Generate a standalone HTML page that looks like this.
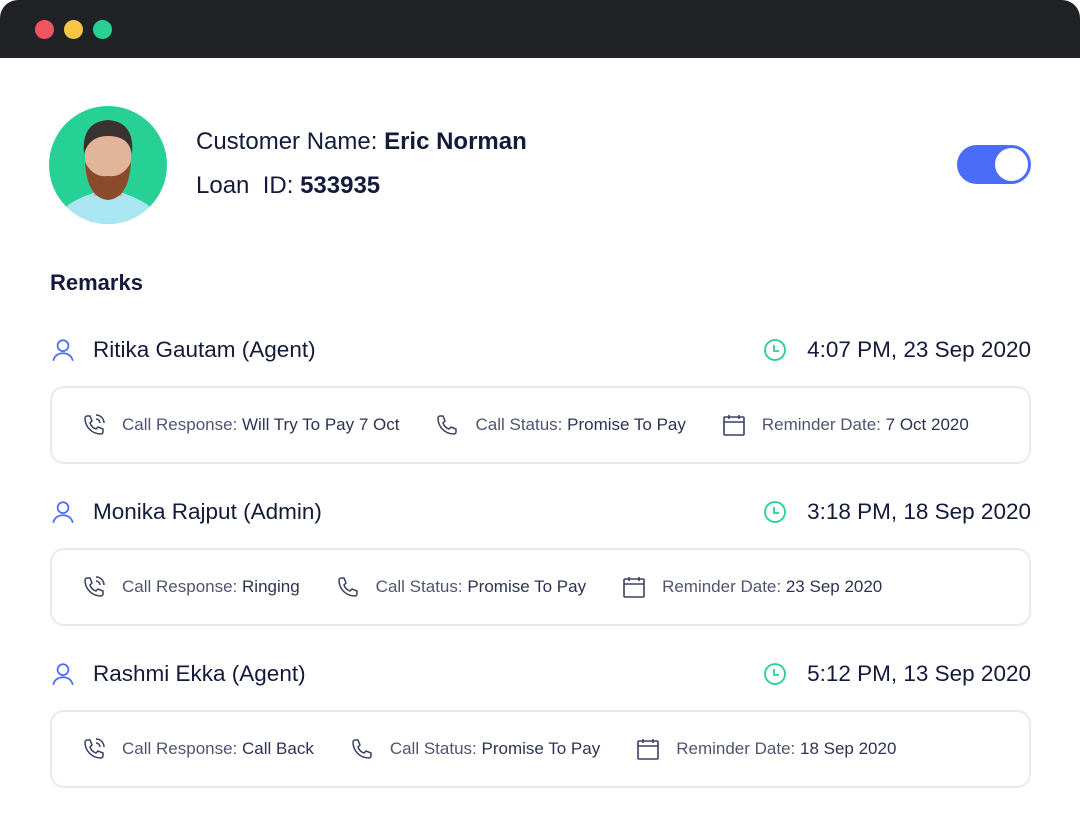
<!DOCTYPE html>
<html><head><meta charset="utf-8"><style>
*{margin:0;padding:0;box-sizing:border-box}
body{width:1080px;height:835px;background:#fff;font-family:"Liberation Sans",sans-serif;color:#131a3a;position:relative;overflow:hidden}
.bar{position:absolute;left:0;top:0;width:1080px;height:58px;background:#202226;border-radius:18px 18px 0 0}
.dot{position:absolute;top:20px;width:19px;height:19px;border-radius:50%}
.av{position:absolute;left:49px;top:106px;width:118px;height:118px;border-radius:50%;background:#27d095;overflow:hidden}
.t1{position:absolute;left:196px;top:128px;font-size:24px;color:#131a3a}
.t2{position:absolute;left:196px;top:172px;font-size:24px;color:#131a3a}
b{font-weight:bold}
.tog{position:absolute;left:957px;top:145px;width:74px;height:39px;border-radius:20px;background:#4a6cf7}
.tog i{position:absolute;right:3px;top:3px;width:33px;height:33px;border-radius:50%;background:#fff}
.rem{position:absolute;left:50px;top:270px;font-size:22px;font-weight:bold}
.hd{position:absolute;left:50px;width:981px;height:30px;font-size:22.5px;display:flex;align-items:center}
.hd .n{margin-left:17px}
.hd .tm{margin-left:auto;display:flex;align-items:center;gap:20px}
.box{position:absolute;left:50px;width:981px;height:78px;border:2px solid #e8eaf0;border-radius:14px;display:flex;align-items:center;padding-left:30px;font-size:17px;color:#4f5570}
.it{display:flex;align-items:center;margin-right:36px}
.it svg{margin-right:16px}
.it span{color:#2c3352}
</style></head><body>
<div class="bar"><div class="dot" style="left:35px;background:#f25562"></div><div class="dot" style="left:64px;background:#f7c644"></div><div class="dot" style="left:93px;background:#27d095"></div></div>
<div class="av"><svg width="118" height="118" viewBox="0 0 118 118">
<path d="M8 108 Q25 92 48 86 L70 86 Q93 92 110 108 L110 118 L8 118Z" fill="#a9e6f2"/>
<rect x="45" y="66" width="28" height="24" fill="#d9a58a"/>
<ellipse cx="59" cy="50" rx="23" ry="28" fill="#e2b49a"/>
<path d="M36 56 Q38 92 59 94 Q80 92 82 56 Q74 72 59 70 Q44 72 36 56Z" fill="#8a4a2c"/>
<path d="M35 48 Q32 16 59 14 Q86 16 83 48 Q80 30 59 30 Q40 30 35 48Z" fill="#3a3230"/>
</svg></div>
<div class="t1">Customer Name: <b>Eric Norman</b></div>
<div class="t2">Loan&nbsp; ID: <b>533935</b></div>
<div class="tog"><i></i></div>
<div class="rem">Remarks</div>

<div class="hd" style="top:335px"><svg width="26" height="26" viewBox="0 0 24 24" fill="none" stroke="#4a6cf7" stroke-width="1.6"><circle cx="12" cy="8" r="5"/><path d="M3 22c1-5 5-7 9-7s8 2 9 7"/></svg><span class="n">Ritika Gautam (Agent)</span><span class="tm"><svg width="24" height="24" viewBox="0 0 24 24" fill="none" stroke="#27d095" stroke-width="1.8"><circle cx="12" cy="12" r="10"/><path d="M11 7v6h5"/></svg>4:07 PM, 23 Sep 2020</span></div>
<div class="box" style="top:386px">
<div class="it"><svg width="24" height="24" viewBox="0 0 24 24" fill="none" stroke="#3a4160" stroke-width="1.5"><path d="M5 3l3 0 2 5-2 2c1 3 3 5 6 6l2-2 5 2v3c0 1-1 2-2 2C10 21 3 14 3 5c0-1 1-2 2-2z"/><path d="M14 6a4 4 0 0 1 4 4M14 2a8 8 0 0 1 8 8"/></svg>Call Response:&nbsp;<span>Will Try To Pay 7 Oct</span></div>
<div class="it"><svg width="24" height="24" viewBox="0 0 24 24" fill="none" stroke="#3a4160" stroke-width="1.5"><path d="M5 3l3 0 2 5-2 2c1 3 3 5 6 6l2-2 5 2v3c0 1-1 2-2 2C10 21 3 14 3 5c0-1 1-2 2-2z"/></svg>Call Status:&nbsp;<span>Promise To Pay</span></div>
<div class="it"><svg width="24" height="24" viewBox="0 0 24 24" fill="none" stroke="#3a4160" stroke-width="1.6"><rect x="2" y="4" width="20" height="18" rx="1"/><path d="M2 9h20M7 2v4M17 2v4"/></svg>Reminder Date:&nbsp;<span>7 Oct 2020</span></div>
</div>

<div class="hd" style="top:497px"><svg width="26" height="26" viewBox="0 0 24 24" fill="none" stroke="#4a6cf7" stroke-width="1.6"><circle cx="12" cy="8" r="5"/><path d="M3 22c1-5 5-7 9-7s8 2 9 7"/></svg><span class="n">Monika Rajput (Admin)</span><span class="tm"><svg width="24" height="24" viewBox="0 0 24 24" fill="none" stroke="#27d095" stroke-width="1.8"><circle cx="12" cy="12" r="10"/><path d="M11 7v6h5"/></svg>3:18 PM, 18 Sep 2020</span></div>
<div class="box" style="top:548px">
<div class="it"><svg width="24" height="24" viewBox="0 0 24 24" fill="none" stroke="#3a4160" stroke-width="1.5"><path d="M5 3l3 0 2 5-2 2c1 3 3 5 6 6l2-2 5 2v3c0 1-1 2-2 2C10 21 3 14 3 5c0-1 1-2 2-2z"/><path d="M14 6a4 4 0 0 1 4 4M14 2a8 8 0 0 1 8 8"/></svg>Call Response:&nbsp;<span>Ringing</span></div>
<div class="it"><svg width="24" height="24" viewBox="0 0 24 24" fill="none" stroke="#3a4160" stroke-width="1.5"><path d="M5 3l3 0 2 5-2 2c1 3 3 5 6 6l2-2 5 2v3c0 1-1 2-2 2C10 21 3 14 3 5c0-1 1-2 2-2z"/></svg>Call Status:&nbsp;<span>Promise To Pay</span></div>
<div class="it"><svg width="24" height="24" viewBox="0 0 24 24" fill="none" stroke="#3a4160" stroke-width="1.6"><rect x="2" y="4" width="20" height="18" rx="1"/><path d="M2 9h20M7 2v4M17 2v4"/></svg>Reminder Date:&nbsp;<span>23 Sep 2020</span></div>
</div>

<div class="hd" style="top:659px"><svg width="26" height="26" viewBox="0 0 24 24" fill="none" stroke="#4a6cf7" stroke-width="1.6"><circle cx="12" cy="8" r="5"/><path d="M3 22c1-5 5-7 9-7s8 2 9 7"/></svg><span class="n">Rashmi Ekka (Agent)</span><span class="tm"><svg width="24" height="24" viewBox="0 0 24 24" fill="none" stroke="#27d095" stroke-width="1.8"><circle cx="12" cy="12" r="10"/><path d="M11 7v6h5"/></svg>5:12 PM, 13 Sep 2020</span></div>
<div class="box" style="top:710px">
<div class="it"><svg width="24" height="24" viewBox="0 0 24 24" fill="none" stroke="#3a4160" stroke-width="1.5"><path d="M5 3l3 0 2 5-2 2c1 3 3 5 6 6l2-2 5 2v3c0 1-1 2-2 2C10 21 3 14 3 5c0-1 1-2 2-2z"/><path d="M14 6a4 4 0 0 1 4 4M14 2a8 8 0 0 1 8 8"/></svg>Call Response:&nbsp;<span>Call Back</span></div>
<div class="it"><svg width="24" height="24" viewBox="0 0 24 24" fill="none" stroke="#3a4160" stroke-width="1.5"><path d="M5 3l3 0 2 5-2 2c1 3 3 5 6 6l2-2 5 2v3c0 1-1 2-2 2C10 21 3 14 3 5c0-1 1-2 2-2z"/></svg>Call Status:&nbsp;<span>Promise To Pay</span></div>
<div class="it"><svg width="24" height="24" viewBox="0 0 24 24" fill="none" stroke="#3a4160" stroke-width="1.6"><rect x="2" y="4" width="20" height="18" rx="1"/><path d="M2 9h20M7 2v4M17 2v4"/></svg>Reminder Date:&nbsp;<span>18 Sep 2020</span></div>
</div>
</body></html>
